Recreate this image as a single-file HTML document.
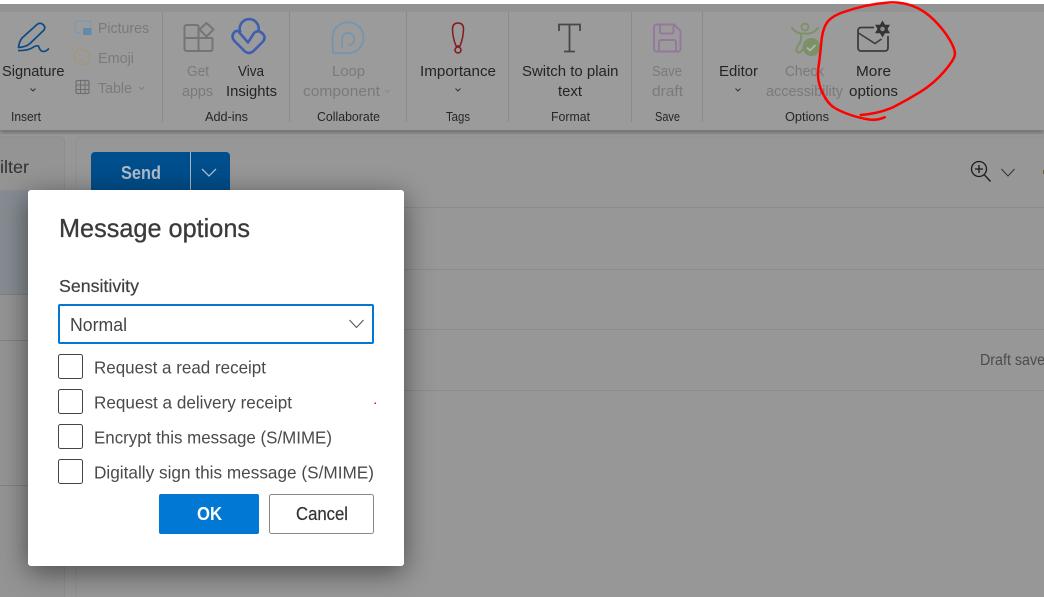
<!DOCTYPE html>
<html lang="en"><head><meta charset="utf-8"><title>Message options</title>
<style>
html,body{margin:0;padding:0;width:1044px;height:597px;overflow:hidden;background:#979797}
svg{display:block;position:absolute;left:0;top:0}
text{font-family:"Liberation Sans",sans-serif}
.a{font-size:15px;fill:#242424}
.d{font-size:15px;fill:#7a7a7a}
.g{font-size:13px;fill:#262626}
.l{font-size:17.500px;fill:#4a4a4a}
</style></head><body>
<svg width="1044" height="597" viewBox="0 0 1044 597" xmlns="http://www.w3.org/2000/svg">
<defs>
<filter id="s" x="-20%" y="-20%" width="140%" height="140%"><feGaussianBlur stdDeviation="14"/></filter>
<filter id="rs" x="-5%" y="-20%" width="110%" height="140%"><feGaussianBlur stdDeviation="2"/></filter>
</defs>
<rect width="1044" height="597" fill="#979797"/>
<rect y="4" width="1044" height="8" fill="#939393"/>
<rect y="126" width="1044" height="7" fill="#000" opacity=".25" filter="url(#rs)"/>
<rect y="12" width="1044" height="118" fill="#9b9b9b"/>
<rect width="1044" height="4" fill="#fff"/>
<!-- left panes -->
<rect x="-6" y="137" width="70.500" height="470" rx="4" fill="#949494" stroke="#8d8d8d"/>
<rect x="76" y="137" width="980" height="470" rx="4" fill="#979797" stroke="#909090"/>
<rect x="0" y="190" width="64" height="104" fill="#868c92"/>
<path d="M0 294.500H64M0 340.500H64M0 485.500H64" stroke="#828282"/>
<path d="M76 207.500H1044M76 269.500H1044M76 329.500H1044M76 390.500H1044" stroke="#8b8b8b"/>
<path d="M162.500 12V122M289.500 12V122M406.500 12V122M508.500 12V122M631.500 12V122M702.500 12V122" stroke="#8a8a8a"/>
<text x="0" y="173" textLength="29" lengthAdjust="spacingAndGlyphs" font-size="17.500" fill="#303030">ilter</text>
<!-- send -->
<path d="M91 190V156a4 4 0 0 1 4-4H226a4 4 0 0 1 4 4V190Z" fill="#004e8c"/>
<path d="M190.500 152V190" stroke="#a8b4bf"/>
<text x="121" y="179" textLength="40" lengthAdjust="spacingAndGlyphs" font-size="18" font-weight="700" fill="#aebccb">Send</text>
<path d="M202 169l7 7 7-7" fill="none" stroke="#aebccb" stroke-width="1.300"/>
<!-- zoom etc -->
<circle cx="979" cy="169" r="7.500" fill="none" stroke="#1c1c1c" stroke-width="1.300"/>
<path d="M975 169h8M979 165v8M984.500 175l6 6.500" stroke="#1c1c1c" stroke-width="1.300" fill="none"/>
<path d="M1001.500 169l6.500 7 6.500-7" fill="none" stroke="#333" stroke-width="1"/>
<rect x="1043" y="170" width="1" height="4" fill="#6d5a3c"/>
<text x="980" y="365" textLength="73" lengthAdjust="spacingAndGlyphs" font-size="15.500" fill="#4c4c4c">Draft saved</text>

<!-- Signature icon -->
<path d="M18.500 47.500Q19 42 22 38L37 24.500Q40 22 43 24.500Q46 27 44 30L30 43.500Q26 47 18.500 47.500Z" fill="none" stroke="#0b4a82" stroke-width="1.700" stroke-linejoin="round"/>
<path d="M18 50.500Q25 51 31 48.500Q36 45 38.500 46Q40 51.500 43.500 51.500Q46 51.500 49 48.500" fill="none" stroke="#0b4a82" stroke-width="1.600"/>
<text class="a" x="2" y="76" textLength="62.500" lengthAdjust="spacingAndGlyphs">Signature</text>
<path d="M30.500 88.500l2.500 2.500 2.500-2.500M455.500 88.500l2.500 2.500 2.500-2.500M735.500 88.500l2.500 2.500 2.500-2.500" fill="none" stroke="#333"/>
<text class="g" x="11" y="121" textLength="30" lengthAdjust="spacingAndGlyphs">Insert</text>
<!-- pictures -->
<path d="M80 33h-3a2 2 0 0 1-2-2V23a2 2 0 0 1 2-2H89a2 2 0 0 1 2 2v4" fill="none" stroke="#7c99b4" stroke-width="1.500"/>
<rect x="83" y="28" width="8.500" height="7" rx="1" fill="#6389ab"/>
<text class="d" x="98" y="33" textLength="51" lengthAdjust="spacingAndGlyphs">Pictures</text>
<circle cx="82" cy="57" r="7.700" fill="none" stroke="#a39676" stroke-width="1.200"/>
<circle cx="79.500" cy="55" r=".9" fill="#a39676"/><circle cx="84.500" cy="55" r=".9" fill="#a39676"/>
<path d="M78 59.500q4 3.500 8 0" fill="none" stroke="#a39676"/>
<text class="d" x="98" y="63" textLength="36" lengthAdjust="spacingAndGlyphs">Emoji</text>
<rect x="76" y="80.500" width="13" height="13" rx="1.500" fill="none" stroke="#6f6f6f" stroke-width="1.200"/>
<path d="M80.500 80.500v13M85 80.500v13M76 85h13M76 89.500h13" stroke="#6f6f6f" stroke-width="1"/>
<text class="d" x="98" y="93" textLength="34" lengthAdjust="spacingAndGlyphs">Table</text>
<path d="M139 87l2.500 2.500 2.500-2.500" fill="none" stroke="#7f7f7f"/>
<!-- get apps -->
<path d="M198.500 29V51H186.500a2 2 0 0 1-2-2V27a2 2 0 0 1 2-2H197a2 2 0 0 1 1.500 2V29ZM184.500 38H212.500M198.500 38V51H210.500a2 2 0 0 0 2-2V38" fill="none" stroke="#757575" stroke-width="2"/>
<path d="M199.500 29.500L206.500 23l7 6.500-7 7Z" fill="none" stroke="#757575" stroke-width="2" stroke-linejoin="round"/>
<text class="d" x="187" y="76" textLength="22" lengthAdjust="spacingAndGlyphs">Get</text>
<text class="d" x="182" y="96" textLength="31" lengthAdjust="spacingAndGlyphs">apps</text>
<!-- viva -->
<path d="M240.500 32.500A9.500 9.500 0 1 1 258.500 30.500M262 33Q258 29.500 254 33L248 42.500L238.500 31.500Q236.500 30 234.500 32Q230.500 36.500 234.500 41L245 51.500Q249 54.500 253 51.500L263 41.500Q266.500 37 262 33" fill="none" stroke="#3f5fae" stroke-width="2.600" stroke-linejoin="round"/>
<text class="a" x="238" y="76" textLength="26" lengthAdjust="spacingAndGlyphs">Viva</text>
<text class="a" x="226" y="96" textLength="51" lengthAdjust="spacingAndGlyphs">Insights</text>
<text class="g" x="205" y="121" textLength="43" lengthAdjust="spacingAndGlyphs">Add-ins</text>
<!-- loop -->
<path d="M333 53L348 53.200A15.500 15.500 0 1 0 332.500 38Z" fill="none" stroke="#7795ae" stroke-width="2"/>
<path d="M342 47.500V39a6.200 6.200 0 1 1 6.200 6.200" fill="none" stroke="#7795ae" stroke-width="1.800"/>
<text class="d" x="332" y="76" textLength="33" lengthAdjust="spacingAndGlyphs">Loop</text>
<text class="d" x="303" y="96" textLength="77" lengthAdjust="spacingAndGlyphs">component</text>
<path d="M385 90l2.500 2.500 2.500-2.500" fill="none" stroke="#8a8a8a"/>
<text class="g" x="317" y="121" textLength="63" lengthAdjust="spacingAndGlyphs">Collaborate</text>
<!-- importance -->
<path d="M452.500 29q0-6 5.500-6t5.500 6q0 8-3.500 17h-4q-3.500-9-3.500-17Z" fill="none" stroke="#851b1e" stroke-width="1.500"/>
<circle cx="458" cy="50" r="3" fill="none" stroke="#851b1e" stroke-width="1.600"/>
<text class="a" x="420" y="76" textLength="76" lengthAdjust="spacingAndGlyphs">Importance</text>
<text class="g" x="446" y="121" textLength="24" lengthAdjust="spacingAndGlyphs">Tags</text>
<!-- T -->
<path d="M559 31v-6.500h21V31M569.500 24.500V51.500M564 51.500h11" fill="none" stroke="#474747" stroke-width="1.800"/>
<text class="a" x="522" y="76" textLength="96.500" lengthAdjust="spacingAndGlyphs">Switch to plain</text>
<text class="a" x="558" y="96" textLength="24" lengthAdjust="spacingAndGlyphs">text</text>
<text class="g" x="551" y="121" textLength="39" lengthAdjust="spacingAndGlyphs">Format</text>
<!-- save -->
<path d="M654 27a2.500 2.500 0 0 1 2.500-2.500H674L680.500 31V49a2.500 2.500 0 0 1-2.500 2.500H656.500A2.500 2.500 0 0 1 654 49ZM660 25v7a1.500 1.500 0 0 0 1.500 1.500H672a1.500 1.500 0 0 0 1.500-1.500V25M659 51V42a2 2 0 0 1 2-2H674a2 2 0 0 1 2 2V51" fill="none" stroke="#94789c" stroke-width="1.900"/>
<text class="d" x="652" y="76" textLength="30" lengthAdjust="spacingAndGlyphs">Save</text>
<text class="d" x="652" y="96" textLength="31" lengthAdjust="spacingAndGlyphs">draft</text>
<text class="g" x="655" y="121" textLength="25" lengthAdjust="spacingAndGlyphs">Save</text>
<!-- editor / accessibility -->
<text class="a" x="719" y="76" textLength="39" lengthAdjust="spacingAndGlyphs">Editor</text>
<circle cx="805" cy="27" r="3.500" fill="none" stroke="#7c9168" stroke-width="1.800"/>
<path d="M792 28q4 5 9 5.500h8q5-.5 9-5.500M801 33.500q1 7-2.500 11.500t-1 7q2 1.500 4-1l4-6" fill="none" stroke="#7c9168" stroke-width="2" stroke-linecap="round"/>
<circle cx="811.500" cy="47" r="9" fill="#7c9168"/>
<path d="M807 47.500l3 3 5.500-5.500" fill="none" stroke="#b0b8aa" stroke-width="1.600"/>
<text class="d" x="785" y="76" textLength="39" lengthAdjust="spacingAndGlyphs">Check</text>
<text class="d" x="766" y="96" textLength="77" lengthAdjust="spacingAndGlyphs">accessibility</text>
<!-- more options -->
<path d="M874 27.500H861a3 3 0 0 0-3 3V48a3 3 0 0 0 3 3H885a3 3 0 0 0 3-3V36" fill="none" stroke="#3c3c3c" stroke-width="1.800"/>
<path d="M858.500 33L875 43.500l6.500-4.500" fill="none" stroke="#3c3c3c" stroke-width="1.600"/>
<path d="M882.500 20.500L885 24.700L890 24.700L887.500 29L890 33.300L885 33.300L882.500 37.500L880 33.300L875 33.300L877.500 29L875 24.700L880 24.700Z" fill="#333"/>
<circle cx="882.500" cy="29" r="2.300" fill="#8a8a8a"/>
<text class="a" x="856" y="76" textLength="35" lengthAdjust="spacingAndGlyphs">More</text>
<text class="a" x="849" y="96" textLength="49" lengthAdjust="spacingAndGlyphs">options</text>
<text class="g" x="785" y="121" textLength="44" lengthAdjust="spacingAndGlyphs">Options</text>
<!-- red annotation -->
<path d="M860.700 115Q880.700 113.300 894 106.700Q907.300 100 920.700 91.700Q934 83.300 944 71.700Q954 60 954.800 55Q955.700 50 949.800 40Q944 30 934 20Q924 10 912.300 5.800Q900.700 1.700 889 2.500Q877.300 3.300 865.700 5.800Q854 8.300 842.300 12.500Q830.700 16.700 826.500 23.300Q822.300 30 821.200 43.300Q820 56.700 818.300 68.300Q816.700 80 822 91.700Q827.300 103.300 834 107.500Q840.700 111.700 850.700 115Q860.700 118.300 869 119.500Q877.300 120.700 884.700 117.300" fill="none" stroke="#f00" stroke-width="2.500" stroke-linecap="round"/>

<!-- dialog -->
<rect x="28" y="196" width="376" height="376" fill="#000" opacity=".5" filter="url(#s)"/>
<rect x="28" y="190" width="376" height="376" rx="3" fill="#fff"/>
<text x="59" y="237" textLength="191" lengthAdjust="spacingAndGlyphs" font-size="26" fill="#3a3a3a" stroke="#3a3a3a" stroke-width=".3">Message options</text>
<text x="59" y="292" textLength="80" lengthAdjust="spacingAndGlyphs" font-size="17.500" fill="#404040" stroke="#404040" stroke-width=".2">Sensitivity</text>
<rect x="59" y="305" width="314" height="38" rx="1" fill="#fff" stroke="#0078d4" stroke-width="2"/>
<text x="70" y="331" textLength="57" lengthAdjust="spacingAndGlyphs" font-size="18" fill="#444">Normal</text>
<path d="M349.500 320l7 7.500 7-7.500" fill="none" stroke="#555" stroke-width="1.100"/>
<rect x="58.500" y="354.500" width="24" height="24" rx="2" fill="#fff" stroke="#444"/>
<rect x="58.500" y="389.500" width="24" height="24" rx="2" fill="#fff" stroke="#444"/>
<rect x="58.500" y="424.500" width="24" height="24" rx="2" fill="#fff" stroke="#444"/>
<rect x="58.500" y="459.500" width="24" height="24" rx="2" fill="#fff" stroke="#444"/>
<text class="l" x="94" y="373.500" textLength="172" lengthAdjust="spacingAndGlyphs">Request a read receipt</text>
<text class="l" x="94" y="408.500" textLength="198" lengthAdjust="spacingAndGlyphs">Request a delivery receipt</text>
<text class="l" x="94" y="443.500" textLength="238" lengthAdjust="spacingAndGlyphs">Encrypt this message (S/MIME)</text>
<text class="l" x="94" y="478.500" textLength="280" lengthAdjust="spacingAndGlyphs">Digitally sign this message (S/MIME)</text>
<rect x="374.500" y="402.500" width="1.500" height="1.500" fill="#f01020"/>
<rect x="159" y="494" width="100" height="40" rx="2" fill="#0078d4"/>
<text x="197" y="520" textLength="25" lengthAdjust="spacingAndGlyphs" font-size="18" font-weight="700" fill="#fff">OK</text>
<rect x="269.500" y="494.500" width="104" height="39" rx="2" fill="#fff" stroke="#8a8886"/>
<text x="296" y="520" textLength="52" lengthAdjust="spacingAndGlyphs" font-size="18" fill="#333" stroke="#333" stroke-width=".2">Cancel</text>
</svg>
</body></html>
